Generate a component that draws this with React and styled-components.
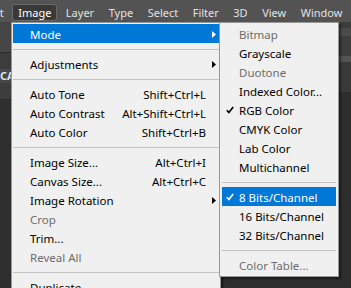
import React from "react";
import styled, { createGlobalStyle } from "styled-components";

const GlobalStyle = createGlobalStyle`
  html, body {
    margin: 0;
    padding: 0;
    background: #2b2b2b;
    overflow: hidden;
  }
  body {
    font-family: "Noto Sans", "Segoe UI", "Liberation Sans", sans-serif;
  }
`;

const Screen = styled.div`
  position: relative;
  width: 351px;
  height: 288px;
  overflow: hidden;
  display: flex;
  flex-direction: column;
  background: #2b2b2b;
`;

/* ---------- top menu bar ---------- */

const MenuBar = styled.div`
  height: 22px;
  flex: none;
  display: flex;
  align-items: flex-start;
  gap: 2.5px;
  padding-top: 4px;
  box-sizing: border-box;
  background: #535353;
  white-space: nowrap;
`;

const BarItem = styled.div`
  height: 17px;
  line-height: 15px;
  padding: 0 5px;
  box-sizing: border-box;
  font-size: 11px;
  color: ${({ $open }) => ($open ? "#ffffff" : "#e2e2e2")};
  background: ${({ $open }) => ($open ? "#393939" : "transparent")};
  border: 1px solid ${({ $open }) => ($open ? "#6b6b6b" : "transparent")};
  border-radius: 3px;
  margin-left: ${({ $offset }) => $offset || 0}px;
`;

/* ---------- workspace behind the menus ---------- */

const Workspace = styled.div`
  flex: 1;
  display: flex;
`;

const LeftDock = styled.div`
  width: 11px;
  flex: none;
  display: flex;
  flex-direction: column;
  background: #3b3b3b;
  overflow: hidden;
`;

const DockBlock = styled.div`
  height: ${({ $h }) => $h}px;
  flex: none;
  background: ${({ $bg }) => $bg};
  border-bottom: ${({ $line }) => ($line ? "1px solid #2a2a2a" : "none")};
  font-size: 11px;
  font-weight: 700;
  color: #d8e6ff;
  line-height: ${({ $h }) => $h}px;
  white-space: nowrap;
`;

const Main = styled.div`
  flex: 1;
  display: flex;
  flex-direction: column;
`;

const Band = styled.div`
  height: ${({ $h }) => $h}px;
  flex: none;
  background: ${({ $bg }) => $bg};
`;

const Canvas = styled.div`
  flex: 1;
  background: #2e2e2e;
`;

/* ---------- dropdown menus ---------- */

const Menu = styled.div`
  position: absolute;
  top: 22px;
  left: ${({ $left }) => $left}px;
  width: ${({ $width }) => $width}px;
  box-sizing: border-box;
  padding: 1px ${({ $padX }) => $padX}px 2px;
  background: #f0f0f0;
  border: 1px solid #979797;
  box-shadow: 2px 2px 2px rgba(0, 0, 0, 0.45);
  z-index: ${({ $z }) => $z};
`;

const Row = styled.div`
  height: 19px;
  display: grid;
  grid-template-columns: 17px 1fr auto 13px;
  align-items: center;
  padding-top: 1px;
  box-sizing: border-box;
  font-size: 11.5px;
  white-space: nowrap;
  background: ${({ $active }) => ($active ? "#0078d7" : "transparent")};
  color: ${({ $active, $disabled }) =>
    $active ? "#ffffff" : $disabled ? "#6d6d6d" : "#000000"};
`;

const Check = styled.span`
  display: flex;
  align-items: center;
  padding-left: 4px;
`;

const Shortcut = styled.span`
  text-align: right;
`;

const Arrow = styled.span`
  display: flex;
  justify-content: flex-end;
  padding-right: 3px;
`;

const Separator = styled.div`
  height: 1px;
  margin: 6px 0 4px;
  background: #c4c4c4;
`;

const CheckMark = ({ color }) => (
  <svg width="8" height="8" viewBox="0 0 8 8">
    <path d="M0.8 4.2 L2.9 6.6 L7.2 0.9" fill="none" stroke={color} strokeWidth="1.6" />
  </svg>
);

const SubArrow = ({ color }) => (
  <svg width="4" height="7" viewBox="0 0 4 7">
    <path d="M0 0 L4 3.5 L0 7 Z" fill={color} />
  </svg>
);

const imageMenu = [
  { label: "Mode", sub: true, active: true },
  "sep",
  { label: "Adjustments", sub: true },
  "sep",
  { label: "Auto Tone", shortcut: "Shift+Ctrl+L" },
  { label: "Auto Contrast", shortcut: "Alt+Shift+Ctrl+L" },
  { label: "Auto Color", shortcut: "Shift+Ctrl+B" },
  "sep",
  { label: "Image Size...", shortcut: "Alt+Ctrl+I" },
  { label: "Canvas Size...", shortcut: "Alt+Ctrl+C" },
  { label: "Image Rotation", sub: true },
  { label: "Crop", disabled: true },
  { label: "Trim..." },
  { label: "Reveal All", disabled: true },
  "sep",
  { label: "Duplicate..." },
];

const modeMenu = [
  { label: "Bitmap", disabled: true },
  { label: "Grayscale" },
  { label: "Duotone", disabled: true },
  { label: "Indexed Color..." },
  { label: "RGB Color", checked: true },
  { label: "CMYK Color" },
  { label: "Lab Color" },
  { label: "Multichannel" },
  "sep",
  { label: "8 Bits/Channel", checked: true, active: true },
  { label: "16 Bits/Channel" },
  { label: "32 Bits/Channel" },
  "sep",
  { label: "Color Table...", disabled: true },
];

const MenuItems = ({ items }) =>
  items.map((item, i) => {
    if (item === "sep") return <Separator key={i} />;
    const fg = item.active ? "#ffffff" : "#000000";
    return (
      <Row key={i} $active={item.active} $disabled={item.disabled}>
        <Check>{item.checked && <CheckMark color={fg} />}</Check>
        <span>{item.label}</span>
        <Shortcut>{item.shortcut}</Shortcut>
        <Arrow>{item.sub && <SubArrow color={fg} />}</Arrow>
      </Row>
    );
  });

const barItems = ["Image", "Layer", "Type", "Select", "Filter", "3D", "View", "Window"];

export default function App() {
  return (
    <Screen>
      <GlobalStyle />
      <MenuBar>
        <BarItem $offset={-22}>Edit</BarItem>
        {barItems.map((name) => (
          <BarItem key={name} $open={name === "Image"}>
            {name}
          </BarItem>
        ))}
      </MenuBar>

      <Workspace>
        <LeftDock>
          <DockBlock $h={30} $bg="#464646" $line />
          <DockBlock $h={16} $bg="#3c3c3c" />
          <DockBlock $h={14} $bg="#474747">CA</DockBlock>
          <DockBlock $h={16} $bg="#3d3d3d" $line />
          <DockBlock $h={200} $bg="#2f2f2f" />
        </LeftDock>
        <Main>
          <Band $h={6} $bg="#3d3d3d" />
          <Band $h={8} $bg="#4b4b4b" />
          <Band $h={20} $bg="#3e3e3e" />
          <Band $h={6} $bg="#545454" />
          <Band $h={30} $bg="#3a3a3a" />
          <Canvas />
        </Main>
      </Workspace>

      <Menu $left={11} $width={210} $padX={1} $z={1}>
        <MenuItems items={imageMenu} />
      </Menu>
      <Menu $left={219} $width={120} $padX={2} $z={2}>
        <MenuItems items={modeMenu} />
      </Menu>
    </Screen>
  );
}
